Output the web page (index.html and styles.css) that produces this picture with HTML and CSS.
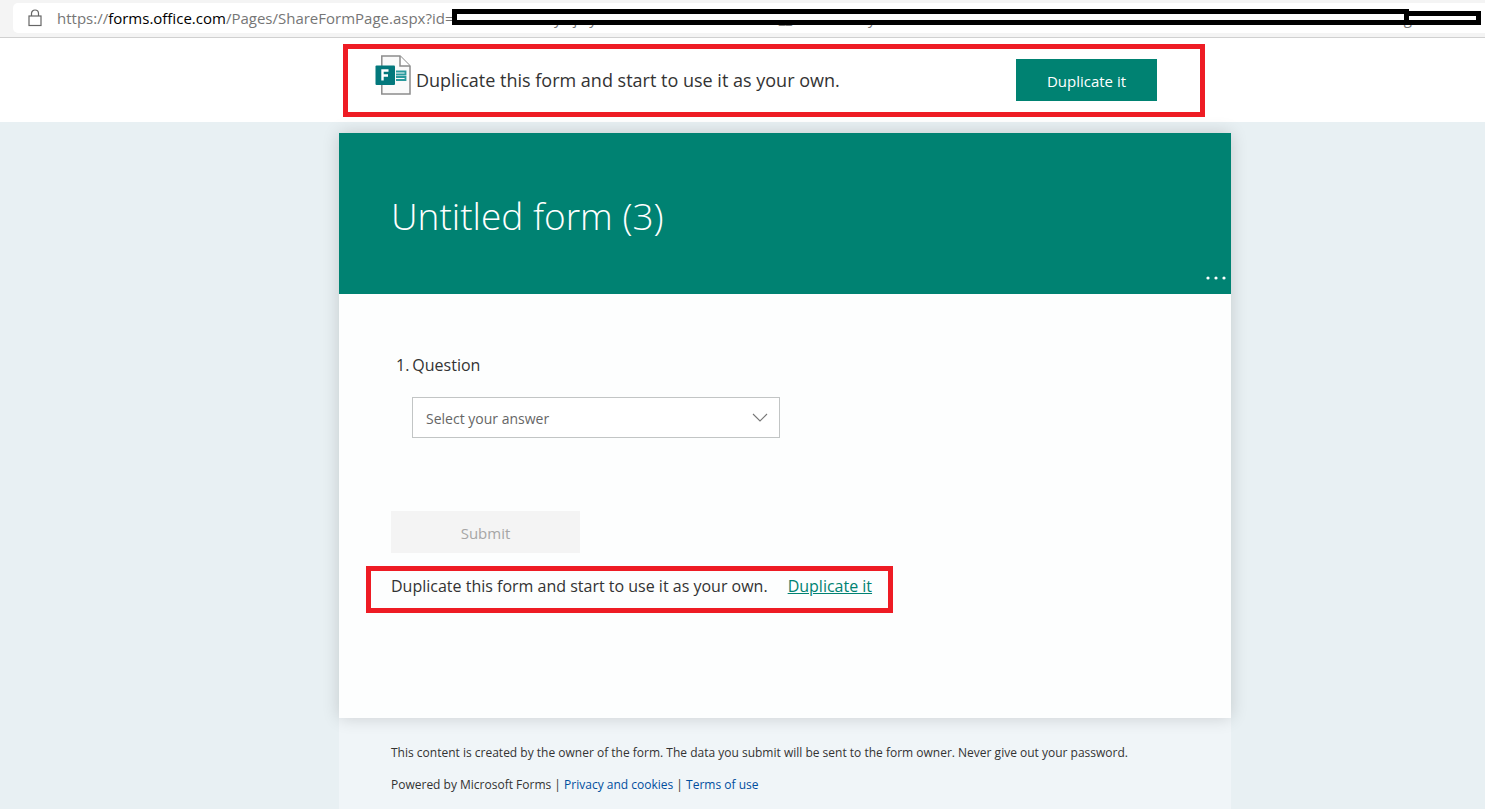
FILE: index.html
```html
<!DOCTYPE html>
<html lang="en">
<head>
    <meta charset="UTF-8">
    <meta name="viewport" content="width=device-width, initial-scale=1.0">
    <title>Untitled form (3)</title>
    <link rel="stylesheet" href="styles.css">
</head>
<body>
    <header class="browser-bar">
        <div class="address">
            <svg class="lock" width="14" height="18" viewBox="0 0 14 18" fill="none" stroke="#666" stroke-width="1.2">
                <rect x="1" y="7" width="12" height="9.5"/>
                <path d="M3.5 7V4.5a3.5 3.5 0 0 1 7 0V7"/>
            </svg>
            <span class="url">https://<b>forms.office.com</b>/Pages/ShareFormPage.aspx?id=</span>
            <div class="masked">
                <div class="tail"><span>y</span><span>j</span><span>y</span><span>__</span><span>y</span><span>g</span></div>
                <div class="mask mask-long"></div>
                <div class="mask mask-short"></div>
            </div>
        </div>
    </header>

    <section class="banner">
        <div class="banner-box">
            <svg class="forms-icon" width="36" height="40" viewBox="0 0 36 40">
                <path d="M6.8 1H25l10 10v28H6.8z" fill="#fafafa" stroke="#8c8c8c" stroke-width="1.5"/>
                <path d="M25 1v10h10" fill="#fff" stroke="#8c8c8c" stroke-width="1.5"/>
                <path d="M21 16.500h9.500v3H21M21 22h9.500v3H21" fill="none" stroke="#2b9a9d" stroke-width="1.800"/>
                <rect x="0.500" y="10.500" width="19.500" height="19.500" rx="1" fill="#03787c"/>
                <path d="M7.500 25.500V15.500h6M7.500 20.500h5.500" fill="none" stroke="#fff" stroke-width="2.400"/>
            </svg>
            <span class="banner-text">Duplicate this form and start to use it as your own.</span>
            <button class="btn btn-primary" type="button">Duplicate it</button>
        </div>
    </section>

    <main class="page">
        <form class="form-card">
            <div class="form-header">
                <h1>Untitled form (3)</h1>
                <button class="more" type="button" aria-label="More options">
                    <svg width="20" height="4" viewBox="0 0 20 4" fill="#fff">
                        <circle cx="2" cy="2" r="1.600"/>
                        <circle cx="10" cy="2" r="1.600"/>
                        <circle cx="18" cy="2" r="1.600"/>
                    </svg>
                </button>
            </div>
            <div class="form-body">
                <div class="question">
                    <span class="number">1.</span>
                    <label for="answer">Question</label>
                </div>
                <div class="select-wrap">
                    <select id="answer">
                        <option>Select your answer</option>
                    </select>
                    <svg class="chevron" width="16" height="9" viewBox="0 0 16 9" fill="none" stroke="#777" stroke-width="1.100">
                        <path d="M1 1l7 7 7-7"/>
                    </svg>
                </div>
                <button class="btn btn-submit" type="submit" disabled>Submit</button>
                <div class="duplicate-box">
                    <span>Duplicate this form and start to use it as your own.</span>
                    <a href="#">Duplicate it</a>
                </div>
            </div>
        </form>
        <footer class="footer">
            <p>This content is created by the owner of the form. The data you submit will be sent to the form owner. Never give out your password.</p>
            <p>Powered by Microsoft Forms | <a href="#">Privacy and cookies</a> | <a href="#">Terms of use</a></p>
        </footer>
    </main>
</body>
</html>
```
FILE: styles.css
```css
* {
    margin: 0;
    padding: 0;
    box-sizing: border-box;
}

body {
    min-height: 100vh;
    display: flex;
    flex-direction: column;
    background: #e8f0f3;
    color: #333;
    font-family: 'Segoe UI', 'Open Sans', sans-serif;
}

/* address bar */
.browser-bar {
    height: 38px;
    padding: 3px 0 4px 13px;
    background: #f4f4f4;
    border-bottom: 1px solid #d0d0d0;
}

.address {
    display: flex;
    align-items: center;
    height: 30px;
    padding: 0 4px 0 15px;
    background: #fff;
    border-radius: 5px 0 0 5px;
    color: #767676;
    font-size: 15px;
}

.lock {
    margin-right: 15px;
}

.url {
    width: 395px;
    white-space: nowrap;
}

.url b {
    color: #000;
    font-weight: 400;
}

.masked {
    position: relative;
    flex: 1;
    height: 30px;
    line-height: 30px;
}

.tail {
    display: flex;
    gap: 12px;
    padding-left: 102px;
}

.tail span:nth-child(3) {
    margin-right: 170px;
}

.tail span:nth-child(4) {
    margin-right: 64px;
}

.tail span:nth-child(5) {
    flex: 1;
}

.tail span:nth-child(6) {
    margin-right: 69px;
}

.mask {
    position: absolute;
    background: #fff;
    border: 5px solid #000;
}

.mask-long {
    top: 6px;
    left: 0;
    right: 72px;
    height: 16px;
}

.mask-short {
    top: 8px;
    right: 0;
    width: 77px;
    height: 14px;
}

/* duplicate banner */
.banner {
    padding: 6px 280px 5px 343px;
    background: #fff;
}

.banner-box {
    display: flex;
    align-items: flex-start;
    height: 73px;
    padding: 6px 43px 0 27px;
    border: 5px solid #ee1c24;
}

.banner-text {
    flex: 1;
    margin-left: 5px;
    font-size: 18px;
    line-height: 50px;
    white-space: nowrap;
}

.btn {
    height: 42px;
    border: none;
    font-family: inherit;
    font-size: 15px;
}

.btn-primary {
    width: 141px;
    margin-top: 4px;
    padding-top: 2px;
    background: #008272;
    color: #fff;
    cursor: pointer;
}

/* form */
.page {
    flex: 1;
    display: flex;
    flex-direction: column;
    padding: 11px 254px 0 339px;
}

.form-card {
    position: relative;
    background: #fdfefe;
    box-shadow: 0 0 16px rgba(0, 0, 0, 0.16);
}

.form-header {
    position: relative;
    height: 161px;
    padding: 56px 52px;
    background: #008272;
    color: #fff;
}

.form-header h1 {
    font-size: 37px;
    font-weight: 300;
    line-height: 54px;
}

.more {
    position: absolute;
    right: 5px;
    bottom: 14px;
    display: flex;
    border: none;
    background: none;
    cursor: pointer;
}

.form-body {
    display: flex;
    flex-direction: column;
    align-items: flex-start;
    padding: 58px 52px 105px;
}

.question {
    display: flex;
    gap: 3px;
    padding-left: 5px;
    font-size: 16px;
    line-height: 26px;
}

.select-wrap {
    position: relative;
    width: 368px;
    margin: 19px 0 73px 21px;
}

.select-wrap select {
    width: 100%;
    height: 41px;
    padding: 2px 13px 0;
    border: 1px solid #c2c5c5;
    border-radius: 0;
    background: #fff;
    color: #666;
    font-family: inherit;
    font-size: 14px;
    appearance: none;
}

.chevron {
    position: absolute;
    right: 12px;
    top: 16px;
    pointer-events: none;
}

.btn-submit {
    width: 189px;
    padding-top: 2px;
    background: #f4f4f4;
    color: #a6a6a6;
}

.duplicate-box {
    display: flex;
    gap: 20px;
    height: 47px;
    margin: 13px 0 0 -25px;
    padding: 0 16px 0 20px;
    border: 5px solid #ee1c24;
    font-size: 16px;
    line-height: 30px;
    white-space: nowrap;
}

.duplicate-box a {
    color: #008272;
}

.footer {
    flex: 1;
    padding: 25px 52px 0;
    background: #f0f5f8;
    font-size: 12px;
    line-height: 20px;
}

.footer p {
    margin-bottom: 12px;
}

.footer a {
    color: #004e9e;
    text-decoration: none;
}
```
